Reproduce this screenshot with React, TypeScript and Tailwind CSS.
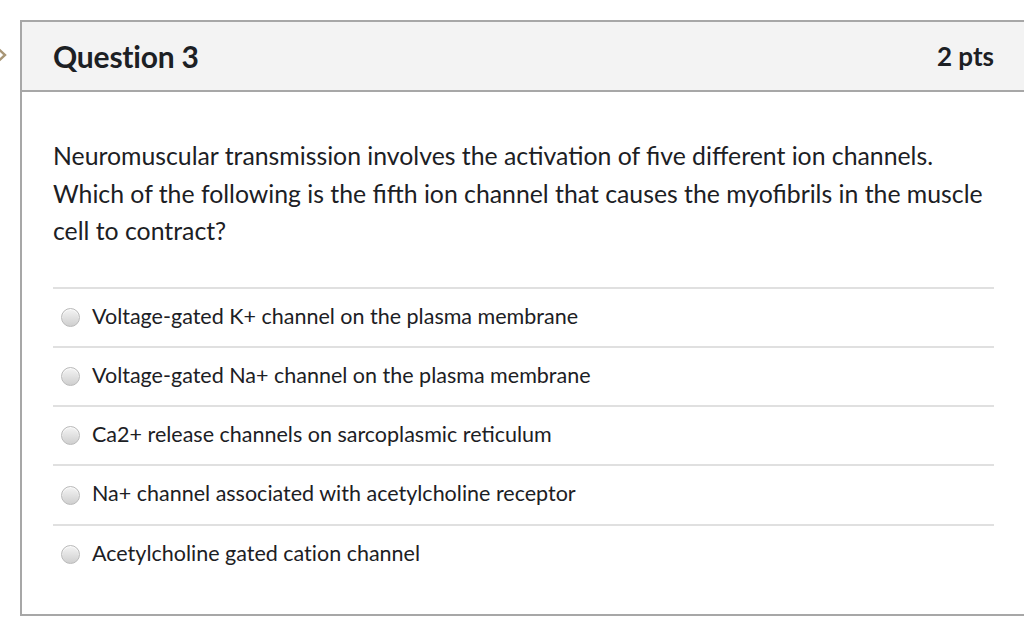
import React from "react";

// \u200C keeps Lato from drawing its "ti" ligature, which the reference doesn't use
const answers = [
  "Voltage-gated K+ channel on the plasma membrane",
  "Voltage-gated Na+ channel on the plasma membrane",
  "Ca2+ release channels on sarcoplasmic reticulum",
  "Na+ channel associated with acetylcholine receptor",
  "Acetylcholine gated cat\u200Cion channel",
];

const questionLines = [
  "Neuromuscular transmission involves the activa\u200Ction of five different ion channels.",
  "Which of the following is the fifth ion channel that causes the myofibrils in the muscle",
  "cell to contract?",
];

function Radio() {
  return (
    <span className="w-[19px] h-[19px] shrink-0 rounded-full border border-[#b9b9b9] bg-gradient-to-b from-[#f4f4f4] to-[#cfcfcf] shadow-[inset_0_1px_1px_rgba(255,255,255,0.8)]" />
  );
}

export default function App() {
  return (
    <div
      className="relative w-[1024px] h-[636px] overflow-hidden bg-white text-[#1c2024]"
      style={{ fontFamily: "Lato, 'Noto Sans', sans-serif" }}
    >
      {/* collapsed side marker */}
      <svg className="absolute left-[-8px] top-[43px]" width="16" height="24" viewBox="0 0 16 24" aria-hidden="true">
        <path d="M2 2 L13 12 L2 22" fill="none" stroke="#a89676" strokeWidth="2.4" />
      </svg>

      <div className="ml-[20px] mt-[20px] w-[1008px] border-2 border-[#a7a7a7]">
        {/* header */}
        <div className="h-[70px] flex items-center justify-between pl-[31px] pr-[32px] bg-[#f3f3f3] border-b-2 border-[#a7a7a7]">
          <h2 className="text-[30px] font-bold tracking-[-0.2px]">Question 3</h2>
          <span className="text-[26px] font-bold">2 pts</span>
        </div>

        {/* body */}
        <div className="pl-[31px] pr-[32px] pt-[45px] pb-[31px]">
          <div className="text-[24.8px] leading-[37.5px]">
            {questionLines.map((l) => (
              <p key={l}>{l}</p>
            ))}
          </div>

          <div className="mt-[37px]">
            {answers.map((a) => (
              <div key={a} className="h-[59.3px] flex items-center gap-[12px] pl-[8px] border-t-2 border-[#e0e0e0]">
                <Radio />
                <span className="text-[21.5px] -mt-[3px]">{a}</span>
              </div>
            ))}
          </div>
        </div>
      </div>
    </div>
  );
}
